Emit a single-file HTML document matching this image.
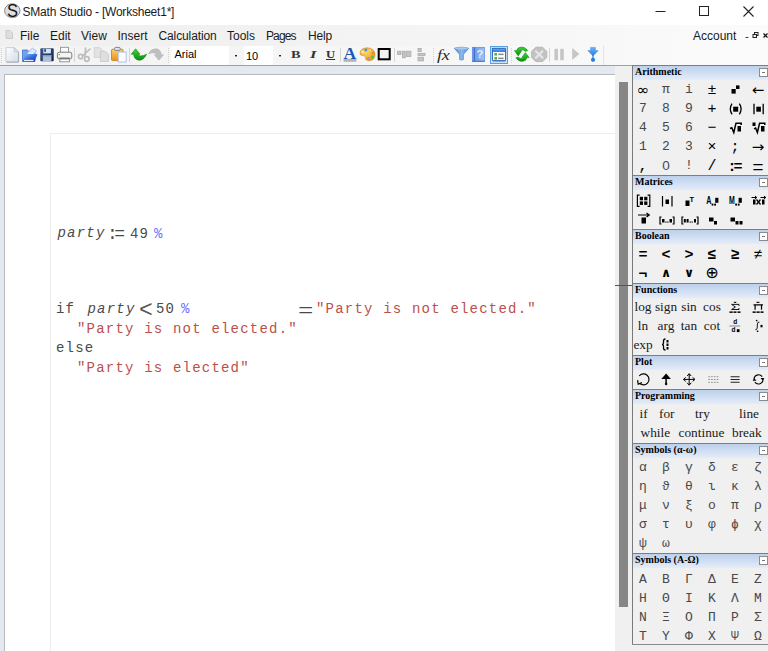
<!DOCTYPE html>
<html><head><meta charset="utf-8"><title>SMath Studio - [Worksheet1*]</title>
<style>
html,body{margin:0;padding:0;}
body{width:768px;height:651px;overflow:hidden;position:relative;background:#fff;font-family:"Liberation Sans",sans-serif;font-size:12px;color:#000;}
#root{position:absolute;left:0;top:0;width:768px;height:651px;overflow:hidden;}
#root div,#root span,#root svg,#root b,#root i{position:absolute;white-space:nowrap;}
#title{left:0;top:0;width:768px;height:25px;background:#fff;}
#title .t{left:22.5px;top:4px;font-size:12px;line-height:16px;color:#1a1a1a;letter-spacing:-0.22px;}
#menu{left:0;top:25px;width:768px;height:41px;background:linear-gradient(to right,#f0f0f0 0%,#f1f1f1 30%,#fbfbfb 100%);}
#menu span{top:3px;font-size:12px;line-height:16px;color:#1a1a1a;}
#tb{left:0;top:46px;width:603px;height:19px;background:linear-gradient(to right,#f3f3f3,#f8f8f8);}
#tbline{left:0;top:65px;width:632px;height:1px;background:#a0a0a0;}
#ws{left:0;top:66px;width:615px;height:585px;background:#e4e8f1;}
#page{left:4px;top:8px;width:611px;height:577px;background:#fff;border-left:1px solid #bababa;border-top:1px solid #bababa;box-sizing:border-box;}
#track{left:615px;top:66px;width:17px;height:585px;background:#f0f0f0;}
#thumb{left:619px;top:82px;width:9px;height:525px;background:#868686;}
.m{font-family:"Liberation Mono",monospace;font-size:14px;letter-spacing:1.2px;line-height:19px;color:#4a4a4a;}
.red{color:#bc4f4a;}
.pct{color:#7070ff;font-size:14px;}
#rp{left:632px;top:65px;width:136px;height:586px;background:#f0f0f0;border-left:1px solid #7a7a7a;box-sizing:border-box;}
.hd{width:136px;height:14px;background:linear-gradient(#bdd0eb,#e4ecfa);border-top:1px solid #6f7f9c;font-family:"Liberation Serif",serif;font-weight:bold;font-size:10px;line-height:13px;color:#000;}
.hd b{left:2px;top:-1px;font-weight:bold;}
.hd i{left:126px;top:2px;width:7px;height:7px;border:1px solid #8c8c8c;background:#fff;}
.hd i:after{content:"";position:absolute;left:2px;top:3px;width:3px;height:1px;background:#777;}
.c{width:23px;height:19px;text-align:center;font-family:"Liberation Mono","DejaVu Sans Mono",monospace;font-size:13px;line-height:19px;color:#484848;}
.k{color:#000;font-size:15px;line-height:22px;}
.ar{color:#000;font-family:"DejaVu Sans",sans-serif;font-size:15px;line-height:21px;}
.f{font-family:"Liberation Serif",serif;font-size:13.33px;line-height:19px;color:#1a1a1a;}
.bo{font-family:"Liberation Mono","DejaVu Sans Mono",monospace;font-weight:bold;font-size:15px;color:#000;}

</style></head><body><div id="root">
<div id="title"><svg width="24" height="24" viewBox="0 0 24 24" style="left:0px;top:0px"><ellipse cx="12.3" cy="10.7" rx="7.7" ry="6.9" fill="#e0e0e0" stroke="#7a7a7a" stroke-width="0.9"/><text x="12.5" y="17.3" text-anchor="middle" font-family="Liberation Sans, sans-serif" font-size="18.5" fill="#111" textLength="11" lengthAdjust="spacingAndGlyphs">S</text></svg><span class="t">SMath Studio - [Worksheet1*]</span>
<svg width="120" height="25" viewBox="0 0 120 25" style="left:648px;top:0"><path d="M7.5 11.5 H17.5" stroke="#222" stroke-width="1"/><rect x="51.5" y="6.5" width="9" height="9" fill="none" stroke="#222" stroke-width="1"/><path d="M95.5 6.5 L105.5 16.5 M105.5 6.5 L95.5 16.5" stroke="#222" stroke-width="1.1"/></svg></div>
<div id="menu">
<svg width="12" height="14" viewBox="0 0 12 14" style="left:5px;top:4px"><path d="M1 1.5 H5 L7.5 4 V9.5 H1 Z" fill="#dedede" stroke="#c4c4c4" stroke-width="0.8"/></svg>
<span style="left:20px">File</span><span style="left:50px">Edit</span><span style="left:81px">View</span><span style="left:117.5px">Insert</span><span style="left:158.5px;letter-spacing:-0.12px">Calculation</span><span style="left:227px">Tools</span><span style="left:266px;letter-spacing:-0.9px">Pages</span><span style="left:308px;letter-spacing:-0.2px">Help</span><span style="left:693px">Account</span>
<span style="left:745px;top:3px;font-size:11px;">-</span>
<svg width="20" height="12" viewBox="0 0 20 12" style="left:750px;top:5px"><rect x="4.5" y="2.5" width="3.5" height="3" fill="none" stroke="#222" stroke-width="1"/><rect x="3" y="4.5" width="3.5" height="3" fill="#f0f0f0" stroke="#222" stroke-width="1"/><path d="M13.5 3.5 L17.5 7.5 M17.5 3.5 L13.5 7.5" stroke="#111" stroke-width="1.2"/></svg>
</div>
<div id="tb"></div>
<svg id="tbi" width="768" height="24" viewBox="0 0 768 24" style="left:0;top:44px"><defs>
<linearGradient id="gdoc" x1="0" y1="0" x2="1" y2="1"><stop offset="0" stop-color="#ffffff"/><stop offset="1" stop-color="#d4dbe6"/></linearGradient>
<linearGradient id="gfold" x1="0" y1="0" x2="1" y2="1"><stop offset="0" stop-color="#8fc0f4"/><stop offset="0.55" stop-color="#2b62dd"/><stop offset="1" stop-color="#1a35b8"/></linearGradient>
<linearGradient id="gsave" x1="0" y1="0" x2="1" y2="1"><stop offset="0" stop-color="#3c5a8c"/><stop offset="1" stop-color="#0f2048"/></linearGradient>
<linearGradient id="gor" x1="0" y1="0" x2="0" y2="1"><stop offset="0" stop-color="#fbd26a"/><stop offset="1" stop-color="#e8901a"/></linearGradient>
<linearGradient id="ggr" x1="0" y1="0" x2="0" y2="1"><stop offset="0" stop-color="#3fd43a"/><stop offset="1" stop-color="#0b8f0b"/></linearGradient>
<linearGradient id="gfun" x1="0" y1="0" x2="1" y2="0"><stop offset="0" stop-color="#4f86cc"/><stop offset="0.5" stop-color="#8db7ea"/><stop offset="1" stop-color="#4f86cc"/></linearGradient>
<linearGradient id="gbook" x1="0" y1="0" x2="1" y2="0"><stop offset="0" stop-color="#5f93e4"/><stop offset="1" stop-color="#a3c4f3"/></linearGradient>
<radialGradient id="gpal" cx="0.4" cy="0.35" r="0.7"><stop offset="0" stop-color="#ffd866"/><stop offset="1" stop-color="#e99a1c"/></radialGradient>
<linearGradient id="gblue" x1="0" y1="0" x2="0" y2="1"><stop offset="0" stop-color="#6fb0f5"/><stop offset="1" stop-color="#2a7de0"/></linearGradient>
</defs><rect x="1" y="4" width="1" height="1" fill="#cfcfcf"/><rect x="2" y="5" width="1" height="1" fill="#fbfbfb"/><rect x="1" y="6" width="1" height="1" fill="#cfcfcf"/><rect x="2" y="7" width="1" height="1" fill="#fbfbfb"/><rect x="1" y="8" width="1" height="1" fill="#cfcfcf"/><rect x="2" y="9" width="1" height="1" fill="#fbfbfb"/><rect x="1" y="10" width="1" height="1" fill="#cfcfcf"/><rect x="2" y="11" width="1" height="1" fill="#fbfbfb"/><rect x="1" y="12" width="1" height="1" fill="#cfcfcf"/><rect x="2" y="13" width="1" height="1" fill="#fbfbfb"/><rect x="1" y="14" width="1" height="1" fill="#cfcfcf"/><rect x="2" y="15" width="1" height="1" fill="#fbfbfb"/><rect x="1" y="16" width="1" height="1" fill="#cfcfcf"/><rect x="2" y="17" width="1" height="1" fill="#fbfbfb"/><rect x="1" y="18" width="1" height="1" fill="#cfcfcf"/><rect x="2" y="19" width="1" height="1" fill="#fbfbfb"/><path d="M6 3.6000000000000014 H14.2 L18.4 7.799999999999997 V17.799999999999997 H6 Z" fill="url(#gdoc)" stroke="#c3c9d3" stroke-width="0.9"/><path d="M14.2 3.6000000000000014 V7.799999999999997 H18.4 Z" fill="#dfe6f0" stroke="#b4bcc9" stroke-width="0.7"/><path d="M6.6 18.200000000000003 H18.6 V8.399999999999999" fill="none" stroke="#9ea5b0" stroke-width="0.9"/><path d="M22.5 6 H27.5 L28.5 7.5 H35 V17.5 H22.5 Z" fill="#6fa3ee" stroke="#3f6fd0" stroke-width="0.8"/><path d="M27 9 L32.5 4.200000000000003 L36.5 7 L31 13 Z" fill="#dce9fb" stroke="#7ea6e6" stroke-width="0.7"/><path d="M25.5 10 H37.5 L34.5 17.799999999999997 H22.5 Z" fill="url(#gfold)"/><path d="M24 16.5 H33.5" stroke="#e8f0ff" stroke-width="1.2"/><rect x="40.3" y="4.200000000000003" width="13.4" height="13" rx="1" fill="url(#gsave)"/><rect x="43.3" y="4.799999999999997" width="7.6" height="4.6" fill="#d6e3f4"/><rect x="44.3" y="5.200000000000003" width="1.6" height="2.6" fill="#1c315f"/><rect x="42.8" y="11.200000000000003" width="8.6" height="5.8" fill="#aebfd8"/><rect x="42.8" y="11.200000000000003" width="8.6" height="1.2" fill="#7d95ba"/><rect x="60.5" y="3.299999999999997" width="8" height="5.5" fill="#fdfdfd" stroke="#8f8f8f" stroke-width="0.9"/><rect x="57.4" y="8.200000000000003" width="14.4" height="6.8" rx="2" fill="#f4f4f4" stroke="#7d7d7d" stroke-width="1"/><rect x="59.5" y="13.600000000000001" width="10.2" height="1.3" fill="#5a5a5a"/><rect x="59.8" y="15" width="9.6" height="2.8" fill="#fafafa" stroke="#8a8a8a" stroke-width="0.9"/><rect x="58.6" y="10" width="1.2" height="1.2" fill="#3dbb3d"/><rect x="74" y="4" width="1" height="14" fill="#d4d4d4"/><g fill="none" stroke="#bdbdbd" stroke-width="1.7" stroke-linecap="round"><path d="M85.6 4 L85 12 "/><path d="M90 5 L82.5 12"/><circle cx="80.6" cy="12.600000000000001" r="2.2"/><circle cx="86.8" cy="15" r="2.3"/></g><path d="M94.2 3.6000000000000014 H100 L103 6.600000000000001 V13.399999999999999 H94.2 Z" fill="#e2e2e2" stroke="#cfcfcf" stroke-width="0.8"/><path d="M100.4 7.399999999999999 H105.6 L108.6 10.399999999999999 V17.5 H100.4 Z" fill="#dedede" stroke="#c6c6c6" stroke-width="0.8"/><rect x="111.5" y="5.200000000000003" width="11.6" height="11.4" rx="1.2" fill="url(#gor)" stroke="#c07a18" stroke-width="0.8"/><rect x="114.6" y="3.3999999999999986" width="5.6" height="3" rx="1" fill="#dfe5ee" stroke="#6b7a93" stroke-width="0.9"/><rect x="118.2" y="8" width="8" height="10" fill="#fbfcff" stroke="#a9bddb" stroke-width="0.9"/><rect x="129" y="4" width="1" height="14" fill="#d4d4d4"/><path d="M135.6 4.799999999999997 L140 10.200000000000003 L138 10.200000000000003 Q139.2 13.799999999999997 146.6 10.200000000000003 Q143.6 16.4 139 16.200000000000003 Q134.2 15.799999999999997 133.6 10.200000000000003 L131.2 10.200000000000003 Z" fill="url(#ggr)" stroke="#0a8a0a" stroke-width="0.6"/><path d="M158.9 16.200000000000003 L154.4 10.799999999999997 L156.6 10.799999999999997 Q155.6 7.200000000000003 148.4 9.799999999999997 Q151.4 4.600000000000001 156 4.799999999999997 Q160.8 5.200000000000003 161.2 10.799999999999997 L163.5 10.799999999999997 Z" fill="#bfbfbf" stroke="#b2b2b2" stroke-width="0.6"/><rect x="168" y="4" width="1" height="1" fill="#cfcfcf"/><rect x="169" y="5" width="1" height="1" fill="#fbfbfb"/><rect x="168" y="6" width="1" height="1" fill="#cfcfcf"/><rect x="169" y="7" width="1" height="1" fill="#fbfbfb"/><rect x="168" y="8" width="1" height="1" fill="#cfcfcf"/><rect x="169" y="9" width="1" height="1" fill="#fbfbfb"/><rect x="168" y="10" width="1" height="1" fill="#cfcfcf"/><rect x="169" y="11" width="1" height="1" fill="#fbfbfb"/><rect x="168" y="12" width="1" height="1" fill="#cfcfcf"/><rect x="169" y="13" width="1" height="1" fill="#fbfbfb"/><rect x="168" y="14" width="1" height="1" fill="#cfcfcf"/><rect x="169" y="15" width="1" height="1" fill="#fbfbfb"/><rect x="168" y="16" width="1" height="1" fill="#cfcfcf"/><rect x="169" y="17" width="1" height="1" fill="#fbfbfb"/><rect x="168" y="18" width="1" height="1" fill="#cfcfcf"/><rect x="169" y="19" width="1" height="1" fill="#fbfbfb"/><rect x="171" y="2" width="58" height="19" fill="#ffffff"/><rect x="244" y="2" width="29" height="19" fill="#ffffff"/><rect x="235" y="11" width="2" height="1.4" fill="#222"/><rect x="279" y="11" width="2" height="1.4" fill="#222"/><rect x="340" y="4" width="1" height="14" fill="#d4d4d4"/><rect x="343.5" y="14.799999999999997" width="13" height="3" fill="#b4b4b4"/><path d="M360 9 Q360.5 4 367 3.799999999999997 Q374.6 4 375 10.5 Q375 16.6 369 16.700000000000003 Q365 16.6 365.6 13.600000000000001 Q365.8 11.600000000000001 363 11.600000000000001 Q360 11.600000000000001 360 9 Z" fill="url(#gpal)" stroke="#d08a1a" stroke-width="0.6"/><circle cx="362.6" cy="8" r="1.3" fill="#f6ecd6"/><circle cx="365.8" cy="6" r="1.4" fill="#4a90ea"/><circle cx="370" cy="6.200000000000003" r="1.2" fill="#f6d0a0"/><circle cx="372.2" cy="13" r="1.4" fill="#2fd24a"/><circle cx="368.6" cy="14.600000000000001" r="1.4" fill="#b483e6"/><circle cx="372.8" cy="9.200000000000003" r="1.1" fill="#ef7a3a"/><rect x="378.7" y="5" width="11" height="10.3" fill="#f2f2f2" stroke="#000" stroke-width="2"/><rect x="394" y="4" width="1" height="14" fill="#d4d4d4"/><g fill="#c4c4c4" stroke="#ababab" stroke-width="0.8"><rect x="397.6" y="7.200000000000003" width="3.4" height="3.2"/><rect x="402.4" y="7.200000000000003" width="2.8" height="6.6"/><rect x="406.5" y="7.200000000000003" width="4.4" height="5.2"/><rect x="418" y="4.399999999999999" width="3.2" height="3"/><rect x="418" y="9.299999999999997" width="7" height="2.1"/><rect x="418" y="13.200000000000003" width="5.4" height="3.7"/></g><rect x="433" y="4" width="1" height="1" fill="#cfcfcf"/><rect x="434" y="5" width="1" height="1" fill="#fbfbfb"/><rect x="433" y="6" width="1" height="1" fill="#cfcfcf"/><rect x="434" y="7" width="1" height="1" fill="#fbfbfb"/><rect x="433" y="8" width="1" height="1" fill="#cfcfcf"/><rect x="434" y="9" width="1" height="1" fill="#fbfbfb"/><rect x="433" y="10" width="1" height="1" fill="#cfcfcf"/><rect x="434" y="11" width="1" height="1" fill="#fbfbfb"/><rect x="433" y="12" width="1" height="1" fill="#cfcfcf"/><rect x="434" y="13" width="1" height="1" fill="#fbfbfb"/><rect x="433" y="14" width="1" height="1" fill="#cfcfcf"/><rect x="434" y="15" width="1" height="1" fill="#fbfbfb"/><rect x="433" y="16" width="1" height="1" fill="#cfcfcf"/><rect x="434" y="17" width="1" height="1" fill="#fbfbfb"/><rect x="433" y="18" width="1" height="1" fill="#cfcfcf"/><rect x="434" y="19" width="1" height="1" fill="#fbfbfb"/><path d="M454.2 4.200000000000003 Q461.5 2 468.8 4.200000000000003 L463.4 10.600000000000001 V15.600000000000001 Q461.5 16.6 459.6 15.600000000000001 V10.600000000000001 Z" fill="url(#gfun)" stroke="#4a7fc6" stroke-width="0.6"/><ellipse cx="461.5" cy="4.399999999999999" rx="6.6" ry="1.2" fill="#a9c8ee"/><rect x="472.3" y="3.299999999999997" width="12.3" height="14.4" fill="url(#gbook)" stroke="#5b8bdc" stroke-width="0.7"/><rect x="474" y="3.299999999999997" width="1" height="14.4" fill="#3f6fc8"/><rect x="472.6" y="16.6" width="12" height="1.2" fill="#4a78cf"/><rect x="490.5" y="2.5" width="17" height="17" fill="#cde3f8" stroke="#5a9ee6" stroke-width="1"/><rect x="492.4" y="4.399999999999999" width="13.2" height="12.4" rx="0.8" fill="#fdfdfd" stroke="#2a5fb4" stroke-width="1"/><rect x="492.4" y="4.399999999999999" width="13.2" height="3.2" fill="url(#gblue)" stroke="#2a5fb4" stroke-width="0.6"/><rect x="494.4" y="9" width="2.6" height="2.6" fill="#45b84a"/><rect x="494.4" y="13" width="2.6" height="2.6" fill="#45b84a"/><rect x="498.2" y="9.600000000000001" width="5.4" height="1.5" fill="#8a8a8a"/><rect x="498.2" y="13.600000000000001" width="5.4" height="1.5" fill="#8a8a8a"/><rect x="493" y="16.200000000000003" width="12.4" height="1" fill="#3c6fc4"/><rect x="511" y="4" width="1" height="1" fill="#cfcfcf"/><rect x="512" y="5" width="1" height="1" fill="#fbfbfb"/><rect x="511" y="6" width="1" height="1" fill="#cfcfcf"/><rect x="512" y="7" width="1" height="1" fill="#fbfbfb"/><rect x="511" y="8" width="1" height="1" fill="#cfcfcf"/><rect x="512" y="9" width="1" height="1" fill="#fbfbfb"/><rect x="511" y="10" width="1" height="1" fill="#cfcfcf"/><rect x="512" y="11" width="1" height="1" fill="#fbfbfb"/><rect x="511" y="12" width="1" height="1" fill="#cfcfcf"/><rect x="512" y="13" width="1" height="1" fill="#fbfbfb"/><rect x="511" y="14" width="1" height="1" fill="#cfcfcf"/><rect x="512" y="15" width="1" height="1" fill="#fbfbfb"/><rect x="511" y="16" width="1" height="1" fill="#cfcfcf"/><rect x="512" y="17" width="1" height="1" fill="#fbfbfb"/><rect x="511" y="18" width="1" height="1" fill="#cfcfcf"/><rect x="512" y="19" width="1" height="1" fill="#fbfbfb"/><g fill="url(#ggr)" stroke="#0a8a0a" stroke-width="0.5"><path d="M514.4 6.600000000000001 L516.6 6.600000000000001 Q517.2 3.200000000000003 521.6 3 Q525.6 3 527.8 6.600000000000001 L525.4 7.399999999999999 Q523.6 5.600000000000001 521.6 5.799999999999997 Q519.8 6 519.8 6.600000000000001 L521.9 6.600000000000001 L518.2 12 Z"/><path d="M529.2 13.600000000000001 L527 13.600000000000001 Q526.4 17.200000000000003 522 17.4 Q518 17.4 515.8 13.799999999999997 L518.2 13 Q520 14.799999999999997 522 14.600000000000001 Q523.8 14.399999999999999 523.8 13.600000000000001 L521.7 13.600000000000001 L525.4 8.600000000000001 Z"/></g><path d="M535.8 3.200000000000003 H542.6 L546.8 7.399999999999999 V13.399999999999999 L542.6 17.6 H535.8 L531.6 13.399999999999999 V7.399999999999999 Z" fill="#c2c2c2" stroke="#b0b0b0" stroke-width="0.8"/><path d="M536 7.200000000000003 L542.4 13.600000000000001 M542.4 7.200000000000003 L536 13.600000000000001" stroke="#e6e6e6" stroke-width="2.2" stroke-linecap="round"/><rect x="549" y="4" width="1" height="14" fill="#d4d4d4"/><rect x="554.4" y="4.799999999999997" width="3.6" height="11.4" fill="#c6c6c6"/><rect x="560.2" y="4.799999999999997" width="3.6" height="11.4" fill="#c6c6c6"/><path d="M572.2 4 L579.4 10 L572.2 16 Z" fill="#c6c6c6"/><path d="M590.6 3.3999999999999986 H595.4 V6.600000000000001 H598.2 L593 12 L587.8 6.600000000000001 H590.6 Z" fill="url(#gblue)" stroke="#3f8ae4" stroke-width="0.5"/><rect x="592.4" y="11" width="1.2" height="3" fill="#2a7de0"/><circle cx="593" cy="15.799999999999997" r="2.1" fill="#2a7de0"/><rect x="603" y="2" width="1" height="19" fill="#e2e2e2"/></svg>
<span class="tt" style="left:174.5px;top:46px;font-size:11px;line-height:16px;">Arial</span>
<span class="tt" style="left:246px;top:48px;font-size:11px;line-height:16px;">10</span>
<span class="tt" style="left:291px;top:46px;font-family:'Liberation Serif',serif;font-weight:bold;font-size:11px;line-height:16px;color:#333;transform:scaleX(1.3);transform-origin:0 0;">B</span>
<span class="tt" style="left:309.5px;top:46px;font-family:'Liberation Serif',serif;font-weight:bold;font-style:italic;font-size:11px;line-height:16px;color:#333;transform:scaleX(1.5);transform-origin:0 0;">I</span>
<span class="tt" style="left:325.5px;top:46px;font-family:'Liberation Serif',serif;font-weight:bold;font-size:11px;line-height:16px;color:#333;text-decoration:underline;transform:scaleX(1.15);transform-origin:0 0;">U</span>
<span class="tt" style="left:343.6px;top:42.5px;font-family:'Liberation Serif',serif;font-weight:bold;font-size:17.6px;line-height:20px;color:#1a58b4;">A</span>
<span class="tt" style="left:437px;top:45px;font-family:'Liberation Serif',serif;font-style:italic;font-size:14.5px;line-height:20px;color:#2a2a2a;letter-spacing:-0.3px;transform:scaleX(1.25);transform-origin:0 0;">fx</span>
<span class="tt" style="left:476.5px;top:47px;font-family:'Liberation Sans',sans-serif;font-weight:bold;font-size:11px;line-height:14px;color:#e4eefc;">?</span>
<div id="tbline"></div>
<div id="ws"><div id="page"></div>
<div id="inner" style="left:50px;top:67px;width:565px;height:518px;border-left:1px solid #ededed;border-top:1px solid #ededed;"></div>
</div>
<div id="eq1" class="m" style="left:57.5px;top:224px;font-style:italic">party</div>
<div class="m" style="left:107px;top:225px;font-size:18px;letter-spacing:-3.5px">:=</div>
<div class="m" style="left:130px;top:225px;">49</div>
<div class="m pct" style="left:154px;top:225px;">%</div>
<div class="m" style="left:56px;top:300px;">if</div>
<div class="m" style="left:87.5px;top:300px;font-style:italic">party</div>
<div class="m" style="left:139px;top:302px;font-size:23px;color:#5a5a5a;">&lt;</div>
<div class="m" style="left:156px;top:300px;">50</div>
<div class="m pct" style="left:181px;top:300px;">%</div>
<div class="m" style="left:298px;top:302px;font-size:18px;color:#4a4a4a;transform:scaleX(1.42);transform-origin:0 0;">=</div>
<div class="m red" style="left:316px;top:300px;">"Party is not elected."</div>
<div class="m red" style="left:77px;top:320px;">"Party is not elected."</div>
<div class="m" style="left:56px;top:339px;">else</div>
<div class="m red" style="left:77px;top:359px;">"Party is elected"</div>
<div id="track"></div><div id="thumb"></div>
<div style="left:615px;top:285px;width:17px;height:1px;background:#3050d0;"></div>
<div id="rp"></div>
<div class="hd" style="left:633px;top:65px;"><b>Arithmetic</b><i></i></div>
<div class="c ar" style="left:631.5px;top:80px;">∞</div>
<div class="c" style="left:654.5px;top:80px;">π</div>
<div class="c" style="left:677.5px;top:80px;">i</div>
<div class="c k" style="left:700.5px;top:80px;">±</div>
<div class="c" style="left:723.5px;top:80px;"><svg width="23" height="19" viewBox="0 0 23 19" style="left:0;top:0"><rect x="7.5" y="9" width="4.2" height="4.6" fill="#000"/><rect x="12" y="5.4" width="3.5" height="3.6" fill="#000"/></svg></div>
<div class="c ar" style="left:746.5px;top:80px;">←</div>
<div class="c" style="left:631.5px;top:99px;">7</div>
<div class="c" style="left:654.5px;top:99px;">8</div>
<div class="c" style="left:677.5px;top:99px;">9</div>
<div class="c k" style="left:700.5px;top:99px;">+</div>
<div class="c" style="left:723.5px;top:99px;"><svg width="23" height="19" viewBox="0 0 23 19" style="left:0;top:0"><rect x="9.2" y="7.7" width="5" height="5" fill="#000"/><path d="M8 4.7 Q4.6 10 8 15.3 M15.4 4.7 Q18.8 10 15.4 15.3" stroke="#000" stroke-width="1.3" fill="none" /></svg></div>
<div class="c" style="left:746.5px;top:99px;"><svg width="23" height="19" viewBox="0 0 23 19" style="left:0;top:0"><rect x="9.3" y="7.7" width="4.6" height="5" fill="#000"/><path d="M7 4.7 V15.3 M16.2 4.7 V15.3" stroke="#000" stroke-width="1.3" fill="none" /></svg></div>
<div class="c" style="left:631.5px;top:118px;">4</div>
<div class="c" style="left:654.5px;top:118px;">5</div>
<div class="c" style="left:677.5px;top:118px;">6</div>
<div class="c k" style="left:700.5px;top:118px;">−</div>
<div class="c" style="left:723.5px;top:118px;"><svg width="23" height="19" viewBox="0 0 23 19" style="left:0;top:0"><rect x="13.5" y="8" width="3.5" height="5.5" fill="#000"/><path d="M6 10.5 L7.8 9.8 L9.8 14.5 L12 5.2 L17.2 5.2 L17.2 7" stroke="#000" stroke-width="1.5" fill="none" /></svg></div>
<div class="c" style="left:746.5px;top:118px;"><svg width="23" height="19" viewBox="0 0 23 19" style="left:0;top:0"><rect x="14" y="8" width="3.5" height="5.5" fill="#000"/><rect x="5.5" y="4.5" width="3" height="3.5" fill="#000"/><path d="M7 10.8 L8.6 10 L10.4 14.5 L12.6 5.2 L17.8 5.2 L17.8 7" stroke="#000" stroke-width="1.5" fill="none" /></svg></div>
<div class="c" style="left:631.5px;top:137px;">1</div>
<div class="c" style="left:654.5px;top:137px;">2</div>
<div class="c" style="left:677.5px;top:137px;">3</div>
<div class="c k" style="left:700.5px;top:137px;">×</div>
<div class="c k" style="left:723.5px;top:137px;">;</div>
<div class="c ar" style="left:746.5px;top:137px;">→</div>
<div class="c k" style="left:631.5px;top:156px;">,</div>
<div class="c" style="left:654.5px;top:156px;"><span style="position:static;font-family:Liberation Sans,sans-serif;font-size:13.5px">0</span></div>
<div class="c" style="left:677.5px;top:156px;">!</div>
<div class="c k" style="left:700.5px;top:156px;">/</div>
<div class="c" style="left:723.5px;top:156px;"><span style="position:relative;left:-1.5px;top:2px;letter-spacing:-3px;color:#000;font-size:15px;font-weight:bold">:=</span></div>
<div class="c" style="left:746.5px;top:156px;"><span style="position:relative;top:2.5px;color:#000;font-size:19px;">=</span></div>
<div class="hd" style="left:633px;top:175px;"><b>Matrices</b><i></i></div>
<div class="c" style="left:631.5px;top:191px;"><svg width="23" height="19" viewBox="0 0 23 19" style="left:0;top:0"><path d="M7.6 4.2 H5.4 V15.4 H7.6 M15.6 4.2 H17.8 V15.4 H15.6" stroke="#000" stroke-width="1.2" fill="none" /><rect x="7.8" y="5.8" width="3.2" height="3.5" fill="#000"/><rect x="12.2" y="5.8" width="3.2" height="3.5" fill="#000"/><rect x="7.8" y="10.4" width="3.2" height="3.5" fill="#000"/><rect x="12.2" y="10.4" width="3.2" height="3.5" fill="#000"/></svg></div>
<div class="c" style="left:654.5px;top:191px;"><svg width="23" height="19" viewBox="0 0 23 19" style="left:0;top:0"><rect x="10.5" y="8.5" width="3.5" height="4.5" fill="#000"/><path d="M7.5 5 V15.5 M17 5 V15.5" stroke="#000" stroke-width="1.2" fill="none" /></svg></div>
<div class="c" style="left:677.5px;top:191px;"><svg width="23" height="19" viewBox="0 0 23 19" style="left:0;top:0"><rect x="7.5" y="9.5" width="4" height="5.5" fill="#000"/><text x="11.5" y="11" font-family="Liberation Sans, sans-serif" font-size="7.5" fill="#000" font-weight="bold">T</text></svg></div>
<div class="c" style="left:700.5px;top:191px;"><svg width="23" height="19" viewBox="0 0 23 19" style="left:0;top:0"><text x="5.2" y="12.6" font-family="Liberation Sans, sans-serif" font-size="10" fill="#000" font-weight="bold" textLength="5.2" lengthAdjust="spacingAndGlyphs">A</text><rect x="14.2" y="6.8" width="3.2" height="5" fill="#000"/><rect x="10.6" y="12.6" width="1.8" height="2" fill="#000"/><rect x="13.2" y="12.6" width="1.8" height="2" fill="#000"/></svg></div>
<div class="c" style="left:723.5px;top:191px;"><svg width="23" height="19" viewBox="0 0 23 19" style="left:0;top:0"><text x="5" y="12.6" font-family="Liberation Sans, sans-serif" font-size="10" fill="#000" font-weight="bold" textLength="5.8" lengthAdjust="spacingAndGlyphs">M</text><rect x="14.6" y="6.8" width="3.2" height="5" fill="#000"/><rect x="11.2" y="12.6" width="1.8" height="2" fill="#000"/><rect x="13.8" y="12.6" width="1.8" height="2" fill="#000"/></svg></div>
<div class="c" style="left:746.5px;top:191px;"><svg width="23" height="19" viewBox="0 0 23 19" style="left:0;top:0"><rect x="6" y="8.5" width="2.5" height="5" fill="#000"/><rect x="15" y="8.5" width="2.5" height="5" fill="#000"/><path d="M9.5 8.5 L13.5 13.5 M13.5 8.5 L9.5 13.5" stroke="#000" stroke-width="1.3" fill="none" /><path d="M4.5 6.5 H9.5 M8 5 L9.8 6.5 L8 8 M13.5 6.5 H18.5 M17 5 L18.8 6.5 L17 8" stroke="#000" stroke-width="1" fill="none" /></svg></div>
<div class="c" style="left:631.5px;top:210px;"><svg width="23" height="19" viewBox="0 0 23 19" style="left:0;top:0"><rect x="9.5" y="7.5" width="4.5" height="6" fill="#000"/><path d="M6 5 H17 M14.5 3 L17.3 5 L14.5 7" stroke="#000" stroke-width="1.2" fill="none" /></svg></div>
<div class="c" style="left:654.5px;top:210px;"><svg width="23" height="19" viewBox="0 0 23 19" style="left:0;top:0"><path d="M6.5 7 H5 V14 H6.5 M17.5 7 H19 V14 H17.5" stroke="#000" stroke-width="1.2" fill="none" /><rect x="7" y="9" width="2.5" height="3.5" fill="#000"/><rect x="14.5" y="9" width="2.5" height="3.5" fill="#000"/><rect x="10.3" y="11.5" width="1.2" height="1.2" fill="#000"/><rect x="12.3" y="11.5" width="1.2" height="1.2" fill="#000"/></svg></div>
<div class="c" style="left:677.5px;top:210px;"><svg width="23" height="19" viewBox="0 0 23 19" style="left:0;top:0"><path d="M5.5 7 H4 V14 H5.5 M18.5 7 H20 V14 H18.5" stroke="#000" stroke-width="1.2" fill="none" /><rect x="5.8" y="9" width="2" height="3.5" fill="#000"/><rect x="8.6" y="9" width="2" height="3.5" fill="#000"/><rect x="16" y="9" width="2" height="3.5" fill="#000"/><rect x="11.6" y="11.5" width="1.2" height="1.2" fill="#000"/><rect x="13.6" y="11.5" width="1.2" height="1.2" fill="#000"/></svg></div>
<div class="c" style="left:700.5px;top:210px;"><svg width="23" height="19" viewBox="0 0 23 19" style="left:0;top:0"><rect x="8" y="7.5" width="4.5" height="4" fill="#000"/><rect x="13" y="11" width="3" height="3.5" fill="#000"/></svg></div>
<div class="c" style="left:723.5px;top:210px;"><svg width="23" height="19" viewBox="0 0 23 19" style="left:0;top:0"><rect x="6.5" y="7.5" width="4.5" height="4" fill="#000"/><rect x="11.5" y="11" width="3" height="3.5" fill="#000"/><rect x="15.5" y="11" width="3" height="3.5" fill="#000"/></svg></div>
<div class="hd" style="left:633px;top:229px;"><b>Boolean</b><i></i></div>
<div class="c bo" style="left:631.5px;top:245.5px;">=</div>
<div class="c bo" style="left:654.5px;top:245.5px;">&lt;</div>
<div class="c bo" style="left:677.5px;top:245.5px;">&gt;</div>
<div class="c bo" style="left:700.5px;top:245.5px;">≤</div>
<div class="c bo" style="left:723.5px;top:245.5px;">≥</div>
<div class="c bo" style="left:746.5px;top:245.5px;"><span style="position:static;font-weight:normal">≠</span></div>
<div class="c bo" style="left:631.5px;top:264.5px;">¬</div>
<div class="c bo" style="left:654.5px;top:264.5px;"><span style="position:static;font-weight:normal;font-family:DejaVu Sans,sans-serif;font-size:12.5px;font-weight:bold;position:relative;top:-1.5px">∧</span></div>
<div class="c bo" style="left:677.5px;top:264.5px;"><span style="position:static;font-weight:normal;font-family:DejaVu Sans,sans-serif;font-size:12.5px;font-weight:bold;position:relative;top:-1.5px">∨</span></div>
<div class="c bo" style="left:700.5px;top:264.5px;"><span style="position:static;font-weight:normal;font-family:DejaVu Sans,sans-serif;font-size:16px;position:relative;top:-2px">⊕</span></div>
<div class="hd" style="left:633px;top:283px;"><b>Functions</b><i></i></div>
<div class="c f" style="left:631.5px;top:297px;">log</div>
<div class="c f" style="left:654.5px;top:297px;">sign</div>
<div class="c f" style="left:677.5px;top:297px;">sin</div>
<div class="c f" style="left:700.5px;top:297px;">cos</div>
<div class="c" style="left:723.5px;top:297px;"><svg width="23" height="19" viewBox="0 0 23 19" style="left:0;top:0"><rect x="9.9" y="4.8" width="2.4" height="1.1" fill="#000"/><path d="M15 9 V7.4 H7.6 L11.4 10 L7.6 12.5 H15 V11" stroke="#000" stroke-width="0.9" fill="none" /><rect x="5.5" y="14.4" width="3.2" height="1.5" fill="#000"/><rect x="9.5" y="14.4" width="3" height="1.5" fill="#000"/><rect x="13.5" y="14.4" width="3" height="1.5" fill="#000"/></svg></div>
<div class="c" style="left:746.5px;top:297px;"><svg width="23" height="19" viewBox="0 0 23 19" style="left:0;top:0"><rect x="9.5" y="4.8" width="2.9" height="1.1" fill="#000"/><path d="M6.5 7.8 H16 M8.1 7.8 V12.8 M14.5 7.8 V12.8" stroke="#000" stroke-width="1.2" fill="none" /><rect x="5.6" y="14.4" width="3.1" height="1.5" fill="#000"/><rect x="9.5" y="14.4" width="3.2" height="1.5" fill="#000"/><rect x="13.5" y="14.4" width="3" height="1.5" fill="#000"/></svg></div>
<div class="c f" style="left:631.5px;top:316px;">ln</div>
<div class="c f" style="left:654.5px;top:316px;">arg</div>
<div class="c f" style="left:677.5px;top:316px;">tan</div>
<div class="c f" style="left:700.5px;top:316px;">cot</div>
<div class="c" style="left:723.5px;top:316px;"><svg width="23" height="19" viewBox="0 0 23 19" style="left:0;top:0"><text x="9.2" y="8.1" font-family="Liberation Sans, sans-serif" font-size="6.5" fill="#000" font-weight="bold">d</text><path d="M5.5 10 H16.3" stroke="#888" stroke-width="1" fill="none" /><text x="7.4" y="16.1" font-family="Liberation Sans, sans-serif" font-size="6.5" fill="#000" font-weight="bold">d</text><rect x="12.8" y="13.2" width="2.7" height="2.9" fill="#000"/></svg></div>
<div class="c" style="left:746.5px;top:316px;"><svg width="23" height="19" viewBox="0 0 23 19" style="left:0;top:0"><path d="M12.4 6.2 Q10.6 5.6 10.4 8 L10.2 12 Q10 14 8.4 13.6" stroke="#000" stroke-width="0.9" fill="none" /><rect x="8.9" y="3.9" width="1.5" height="1.4" fill="#000"/><rect x="9.8" y="14.6" width="1.5" height="1.4" fill="#000"/><rect x="13.5" y="8.9" width="2" height="2.4" fill="#000"/></svg></div>
<div class="c f" style="left:631.5px;top:335px;">exp</div>
<div class="c" style="left:654.5px;top:335px;"><svg width="23" height="19" viewBox="0 0 23 19" style="left:0;top:0"><path d="M10.5 4 Q8.5 4 8.5 6 V8 Q8.5 9.5 7 9.5 Q8.5 9.5 8.5 11 V13 Q8.5 15 10.5 15" stroke="#000" stroke-width="1.3" fill="none" /><rect x="11.5" y="5" width="2" height="2.5" fill="#000"/><rect x="11.5" y="8.5" width="2" height="2.5" fill="#000"/><rect x="11.5" y="12" width="2" height="2.5" fill="#000"/></svg></div>
<div class="hd" style="left:633px;top:355px;"><b>Plot</b><i></i></div>
<div class="c" style="left:631.5px;top:370px;"><svg width="23" height="19" viewBox="0 0 23 19" style="left:0;top:0"><path d="M7.2 6 A5.5 5.5 0 1 1 7.6 13.3" stroke="#000" stroke-width="1.2" fill="none" /><path d="M5.6 10.2 L6.2 14.2 L10 12.6" stroke="#000" stroke-width="1.2" fill="none" /></svg></div>
<div class="c" style="left:654.5px;top:370px;"><svg width="23" height="19" viewBox="0 0 23 19" style="left:0;top:0"><path d="M11.1 8 V14.2" stroke="#000" stroke-width="1.5" fill="none" /><path d="M6.3 8.9 L11.1 3.4 L15.9 8.9 Z" stroke="none" stroke-width="0" fill="#000" /><path d="M9.6 14 L11.1 12.6 L12.6 14 L11.1 15.4 Z" stroke="none" stroke-width="0" fill="#000" /></svg></div>
<div class="c" style="left:677.5px;top:370px;"><svg width="23" height="19" viewBox="0 0 23 19" style="left:0;top:0"><path d="M11.2 4 V14.8 M5.8 9.4 H16.6" stroke="#000" stroke-width="1" fill="none" /><path d="M9.2 6 L11.2 3.6 L13.2 6 M9.2 12.8 L11.2 15.2 L13.2 12.8 M7.8 7.4 L5.4 9.4 L7.8 11.4 M14.6 7.4 L17 9.4 L14.6 11.4" stroke="#000" stroke-width="1" fill="none" /></svg></div>
<div class="c" style="left:700.5px;top:370px;"><svg width="23" height="19" viewBox="0 0 23 19" style="left:0;top:0"><rect x="7.3" y="6.2" width="1.6" height="1" fill="#8c8c8c"/><rect x="10.1" y="6.2" width="1.6" height="1" fill="#8c8c8c"/><rect x="12.9" y="6.2" width="1.6" height="1" fill="#8c8c8c"/><rect x="15.7" y="6.2" width="1.6" height="1" fill="#8c8c8c"/><rect x="7.3" y="9" width="1.6" height="1" fill="#8c8c8c"/><rect x="10.1" y="9" width="1.6" height="1" fill="#8c8c8c"/><rect x="12.9" y="9" width="1.6" height="1" fill="#8c8c8c"/><rect x="15.7" y="9" width="1.6" height="1" fill="#8c8c8c"/><rect x="7.3" y="11.8" width="1.6" height="1" fill="#8c8c8c"/><rect x="10.1" y="11.8" width="1.6" height="1" fill="#8c8c8c"/><rect x="12.9" y="11.8" width="1.6" height="1" fill="#8c8c8c"/><rect x="15.7" y="11.8" width="1.6" height="1" fill="#8c8c8c"/></svg></div>
<div class="c" style="left:723.5px;top:370px;"><svg width="23" height="19" viewBox="0 0 23 19" style="left:0;top:0"><path d="M6.6 6.7 H15.6 M6.6 9.5 H15.6 M6.6 12.3 H15.6" stroke="#222" stroke-width="1.1" fill="none" /></svg></div>
<div class="c" style="left:746.5px;top:370px;"><svg width="23" height="19" viewBox="0 0 23 19" style="left:0;top:0"><path d="M7 9.6 A4.6 4.6 0 0 1 15.2 6.6 M16 9 A4.6 4.6 0 0 1 7.8 12.2" stroke="#000" stroke-width="1.1" fill="none" /><path d="M13.6 8 L17.4 8 L15.6 10.6 Z M9.4 10.8 L5.6 10.8 L7.4 8.2 Z" stroke="none" stroke-width="0" fill="#000" /></svg></div>
<div class="hd" style="left:633px;top:389px;"><b>Programming</b><i></i></div>
<div class="f" style="left:639.5px;top:404px;">if</div>
<div class="f" style="left:659px;top:404px;">for</div>
<div class="f" style="left:695px;top:404px;">try</div>
<div class="f" style="left:739px;top:404px;">line</div>
<div class="f" style="left:640.5px;top:423px;">while</div>
<div class="f" style="left:678.5px;top:423px;">continue</div>
<div class="f" style="left:732px;top:423px;">break</div>
<div class="hd" style="left:633px;top:443px;"><b>Symbols (α-ω)</b><i></i></div>
<div class="c" style="left:631.5px;top:458px;">α</div>
<div class="c" style="left:654.5px;top:458px;">β</div>
<div class="c" style="left:677.5px;top:458px;">γ</div>
<div class="c" style="left:700.5px;top:458px;">δ</div>
<div class="c" style="left:723.5px;top:458px;">ε</div>
<div class="c" style="left:746.5px;top:458px;">ζ</div>
<div class="c" style="left:631.5px;top:477px;">η</div>
<div class="c" style="left:654.5px;top:477px;">ϑ</div>
<div class="c" style="left:677.5px;top:477px;">θ</div>
<div class="c" style="left:700.5px;top:477px;">ι</div>
<div class="c" style="left:723.5px;top:477px;">κ</div>
<div class="c" style="left:746.5px;top:477px;">λ</div>
<div class="c" style="left:631.5px;top:496px;">μ</div>
<div class="c" style="left:654.5px;top:496px;">ν</div>
<div class="c" style="left:677.5px;top:496px;">ξ</div>
<div class="c" style="left:700.5px;top:496px;">ο</div>
<div class="c" style="left:723.5px;top:496px;">π</div>
<div class="c" style="left:746.5px;top:496px;">ρ</div>
<div class="c" style="left:631.5px;top:515px;">σ</div>
<div class="c" style="left:654.5px;top:515px;">τ</div>
<div class="c" style="left:677.5px;top:515px;">υ</div>
<div class="c" style="left:700.5px;top:515px;">φ</div>
<div class="c" style="left:723.5px;top:515px;">ϕ</div>
<div class="c" style="left:746.5px;top:515px;">χ</div>
<div class="c" style="left:631.5px;top:534px;">ψ</div>
<div class="c" style="left:654.5px;top:534px;">ω</div>
<div class="hd" style="left:633px;top:553px;"><b>Symbols (Α-Ω)</b><i></i></div>
<div class="c" style="left:631.5px;top:569.5px;">Α</div>
<div class="c" style="left:654.5px;top:569.5px;">Β</div>
<div class="c" style="left:677.5px;top:569.5px;">Γ</div>
<div class="c" style="left:700.5px;top:569.5px;">Δ</div>
<div class="c" style="left:723.5px;top:569.5px;">Ε</div>
<div class="c" style="left:746.5px;top:569.5px;">Ζ</div>
<div class="c" style="left:631.5px;top:588.5px;">Η</div>
<div class="c" style="left:654.5px;top:588.5px;">Θ</div>
<div class="c" style="left:677.5px;top:588.5px;">Ι</div>
<div class="c" style="left:700.5px;top:588.5px;">Κ</div>
<div class="c" style="left:723.5px;top:588.5px;">Λ</div>
<div class="c" style="left:746.5px;top:588.5px;">Μ</div>
<div class="c" style="left:631.5px;top:607.5px;">Ν</div>
<div class="c" style="left:654.5px;top:607.5px;">Ξ</div>
<div class="c" style="left:677.5px;top:607.5px;">Ο</div>
<div class="c" style="left:700.5px;top:607.5px;">Π</div>
<div class="c" style="left:723.5px;top:607.5px;">Ρ</div>
<div class="c" style="left:746.5px;top:607.5px;">Σ</div>
<div class="c" style="left:631.5px;top:626.5px;">Τ</div>
<div class="c" style="left:654.5px;top:626.5px;">Υ</div>
<div class="c" style="left:677.5px;top:626.5px;">Φ</div>
<div class="c" style="left:700.5px;top:626.5px;">Χ</div>
<div class="c" style="left:723.5px;top:626.5px;">Ψ</div>
<div class="c" style="left:746.5px;top:626.5px;">Ω</div>
<div style="left:632px;top:644px;width:136px;height:1px;background:#8a8a8a;"></div>
<div style="left:632px;top:645px;width:136px;height:6px;background:#f0f0f0;"></div>
</div></body></html>
